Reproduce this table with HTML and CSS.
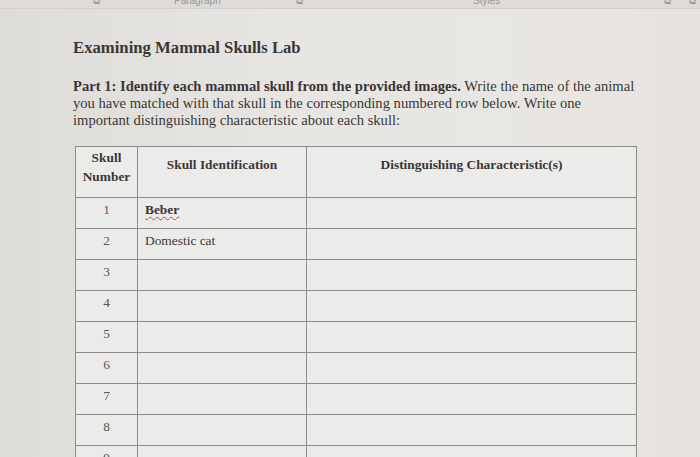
FILE: index.html
```html
<!DOCTYPE html>
<html>
<head>
<meta charset="utf-8">
<link rel="stylesheet" href="styles.css">
</head>
<body>
<div class="ribbon">
  <span class="launch l1">⧉</span>
  <span class="rlabel para">Paragraph</span>
  <span class="launch l2">⧉</span>
  <span class="rlabel styles">Styles</span>
  <span class="launch l3">⧉</span>
  <span class="launch l4">⧉</span>
</div>
<div class="page">
  <h1 class="title">Examining Mammal Skulls Lab</h1>
  <p class="intro"><b>Part 1: Identify each mammal skull from the provided images.</b> Write the name of the animal<br>you have matched with that skull in the corresponding numbered row below. Write one<br>important distinguishing characteristic about each skull:</p>
  <table class="skulls">
    <colgroup><col class="c1"><col class="c2"><col class="c3"></colgroup>
    <thead>
      <tr><th class="num-h">Skull<br>Number</th><th class="mid-h">Skull Identification</th><th class="mid-h">Distinguishing Characteristic(s)</th></tr>
    </thead>
    <tbody>
      <tr><td class="num">1</td><td><span class="typo">Beber</span></td><td></td></tr>
      <tr><td class="num">2</td><td>Domestic cat</td><td></td></tr>
      <tr><td class="num">3</td><td></td><td></td></tr>
      <tr><td class="num">4</td><td></td><td></td></tr>
      <tr><td class="num">5</td><td></td><td></td></tr>
      <tr><td class="num">6</td><td></td><td></td></tr>
      <tr><td class="num">7</td><td></td><td></td></tr>
      <tr><td class="num">8</td><td></td><td></td></tr>
      <tr><td class="num">9</td><td></td><td></td></tr>
    </tbody>
  </table>
</div>
</body>
</html>
```
FILE: styles.css
```css
html, body {
  margin: 0;
  padding: 0;
  height: 457px;
  overflow: hidden;
}
body {
  background: linear-gradient(90deg, #dedcd9 0%, #e7e6e3 45%, #e9e6e2 80%, #e6e2de 100%);
  font-family: "Liberation Serif", "Times New Roman", serif;
  color: #3b3636;
}
.ribbon {
  position: relative;
  height: 8px;
  overflow: hidden;
  background: #dddad7;
  border-bottom: 1px solid #d2cfcc;
  font-family: "Liberation Sans", Arial, sans-serif;
  font-size: 10px;
  color: #9a9895;
}
.ribbon span {
  position: absolute;
  top: -5px;
}
.l1 { left: 93px; }
.para { left: 174px; }
.l2 { left: 296px; }
.styles { left: 473px; }
.l3 { left: 664px; }
.l4 { left: 689px; }
.page {
  padding: 28px 0 0 73px;
}
.title {
  margin: 0;
  font-size: 16.7px;
  line-height: 22px;
  font-weight: bold;
}
.intro {
  margin: 19px 0 0 0;
  font-size: 14.6px;
  line-height: 17px;
}
.skulls {
  margin: 17px 0 0 2px;
  border-collapse: collapse;
  background: #ebebea;
  font-size: 13.4px;
}
.c1 { width: 62px; }
.c2 { width: 169px; }
.c3 { width: 330px; }
.skulls th, .skulls td {
  border: 1px solid #8e8c8a;
  padding: 0;
}
.skulls th {
  height: 40px;
  vertical-align: top;
  font-weight: bold;
}
.num-h {
  padding-top: 1px !important;
  line-height: 19px;
}
.mid-h {
  padding-top: 10px !important;
  line-height: 16px;
}
.skulls td {
  height: 26px;
  vertical-align: top;
  padding-top: 4px;
  line-height: 16px;
}
.skulls td:nth-child(2) {
  padding-left: 7px;
}
.num {
  text-align: center;
  color: #5a5755;
}
.typo {
  font-weight: bold;
  text-decoration: underline wavy #d04848;
  text-decoration-thickness: 1px;
  text-underline-offset: 2px;
}
```
